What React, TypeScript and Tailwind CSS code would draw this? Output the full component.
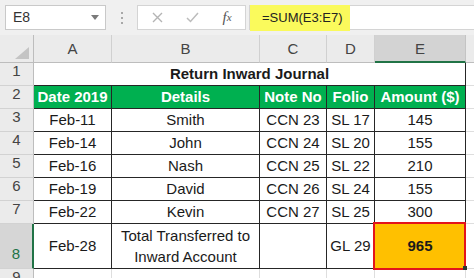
import React from "react";

const rows = [
  ["3", "Feb-11", "Smith", "CCN 23", "SL 17", "145"],
  ["4", "Feb-14", "John", "CCN 24", "SL 20", "155"],
  ["5", "Feb-16", "Nash", "CCN 25", "SL 22", "210"],
  ["6", "Feb-19", "David", "CCN 26", "SL 24", "155"],
  ["7", "Feb-22", "Kevin", "CCN 27", "SL 25", "300"],
];

const heads = ["Date 2019", "Details", "Note No", "Folio", "Amount ($)"];

function RowHead({ n }: { n: string }) {
  return (
    <div className="flex items-end justify-center pb-[3px] bg-[#ebebeb] border-r border-b border-r-[#bdbdbd] border-b-[#d2d2d2] text-[#444]">
      {n}
    </div>
  );
}

function Cell({ children }: { children?: React.ReactNode }) {
  return (
    <div className="flex items-center justify-center border-r border-b border-[#262626] whitespace-nowrap">
      {children}
    </div>
  );
}

function Spare() {
  return <div className="border-b border-[#dedede] bg-white" />;
}

export default function App() {
  return (
    <div className="w-[474px] h-[278px] overflow-hidden bg-white font-['Liberation_Sans',Arial,sans-serif] text-[15px] text-[#1a1a1a]">
      {/* formula bar */}
      <div className="h-[35px] bg-[#f0f0f0] flex items-start pt-[5px] pl-[5px]">
        <div className="w-[101px] h-[25px] bg-white border border-[#c9c9c9] flex items-center justify-between pl-[7px] pr-[6px] text-[14px] text-[#333]">
          <span>E8</span>
          <svg width="8" height="5" viewBox="0 0 8 5">
            <polygon points="0,0 8,0 4,5" fill="#7a7a7a" />
          </svg>
        </div>
        <div className="w-[31px] h-[25px] flex flex-col items-center justify-center gap-[3px]">
          <span className="w-[2px] h-[2px] bg-[#a8a8a8]" />
          <span className="w-[2px] h-[2px] bg-[#a8a8a8]" />
          <span className="w-[2px] h-[2px] bg-[#a8a8a8]" />
        </div>
        <div className="w-[109px] h-[25px] bg-white border border-[#d4d4d4] flex items-center">
          <div className="w-[37px] flex justify-center pl-[1px]">
            <svg width="11" height="11" viewBox="0 0 11 11">
              <path d="M1 1 L10 10 M10 1 L1 10" stroke="#b4b4b4" strokeWidth="1.4" />
            </svg>
          </div>
          <div className="w-[34px] flex justify-center">
            <svg width="13" height="11" viewBox="0 0 13 11">
              <path d="M1 6 L4.5 9.5 L12 1" stroke="#bcbcbc" strokeWidth="1.5" fill="none" />
            </svg>
          </div>
          <div className="w-[36px] flex justify-center font-['Liberation_Serif',serif] italic text-[#555] text-[15px]">
            f<span className="text-[11px] mt-[3px]">x</span>
          </div>
        </div>
        <div className="flex-1 ml-[3px] h-[25px] bg-white border-y border-l border-[#d4d4d4] flex">
          <div className="w-[100px] -my-[1px] h-[26px] bg-[#fafa5c] flex items-center pl-[12px] text-[13px] text-[#222]">
            =SUM(E3:E7)
          </div>
        </div>
      </div>

      {/* sheet */}
      <div className="grid grid-cols-[34px_78px_148px_67px_48px_91px_1fr] grid-rows-[28px_repeat(7,23px)_45px_23px]">
        {/* column headers */}
        <div className="relative bg-[#ebebeb] border-r border-b border-[#bdbdbd]">
          <svg className="absolute left-0 top-0" width="34" height="28" viewBox="0 0 34 28">
            <polygon points="29,12 29,24 15,24" fill="#c4c4c4" />
          </svg>
        </div>
        {["A", "B", "C", "D"].map((c) => (
          <div key={c} className="flex items-center justify-center pt-[1px] bg-[#ebebeb] border-r border-b border-r-[#d0d0d0] border-b-[#bdbdbd] text-[#444]">
            {c}
          </div>
        ))}
        <div className="flex items-center justify-center pt-[2px] bg-[#d3d3d3] border-r border-r-[#c4c4c4] border-b-2 border-b-[#217346] text-[#444]">
          E
        </div>
        <div className="bg-[#ebebeb] border-b border-[#bdbdbd]" />

        {/* row 1 */}
        <RowHead n="1" />
        <div className="col-span-5 flex items-center justify-center font-bold border-r border-b border-[#262626]">
          Return Inward Journal
        </div>
        <Spare />

        {/* row 2 */}
        <RowHead n="2" />
        {heads.map((h) => (
          <div key={h} className="flex items-center justify-center bg-[#00b050] text-white font-bold border-r border-b border-[#262626] whitespace-nowrap">
            {h}
          </div>
        ))}
        <Spare />

        {/* rows 3-7 */}
        {rows.map((r) => (
          <React.Fragment key={r[0]}>
            <RowHead n={r[0]} />
            {r.slice(1).map((v, i) => (
              <Cell key={i}>{v}</Cell>
            ))}
            <Spare />
          </React.Fragment>
        ))}

        {/* row 8 */}
        <div className="flex items-end justify-center pb-[3px] bg-[#d6d6d6] border-r-2 border-r-[#217346] border-b border-b-[#d2d2d2] text-[#217346]">
          8
        </div>
        <Cell>Feb-28</Cell>
        <div className="flex items-center justify-center text-center leading-[21px] border-r border-b border-[#262626]">
          Total Transferred to
          <br />
          Inward Account
        </div>
        <Cell />
        <Cell>GL 29</Cell>
        <div className="relative flex items-center justify-center bg-[#ffc000] font-bold border-r border-b border-[#262626]">
          965
          <div className="absolute -left-[2px] -top-[2px] -right-[1px] -bottom-[2px] border-[2.5px] border-[#e3141b]" />
          <div className="absolute -right-[2px] -bottom-[2px] w-[4px] h-[4px] bg-[#2b3a2f]" />
        </div>
        <Spare />

        {/* row 9 */}
        <RowHead n="9" />
        {[0, 1, 2, 3, 4].map((i) => (
          <div key={i} className="border-r border-b border-[#dedede]" />
        ))}
        <Spare />
      </div>
    </div>
  );
}
